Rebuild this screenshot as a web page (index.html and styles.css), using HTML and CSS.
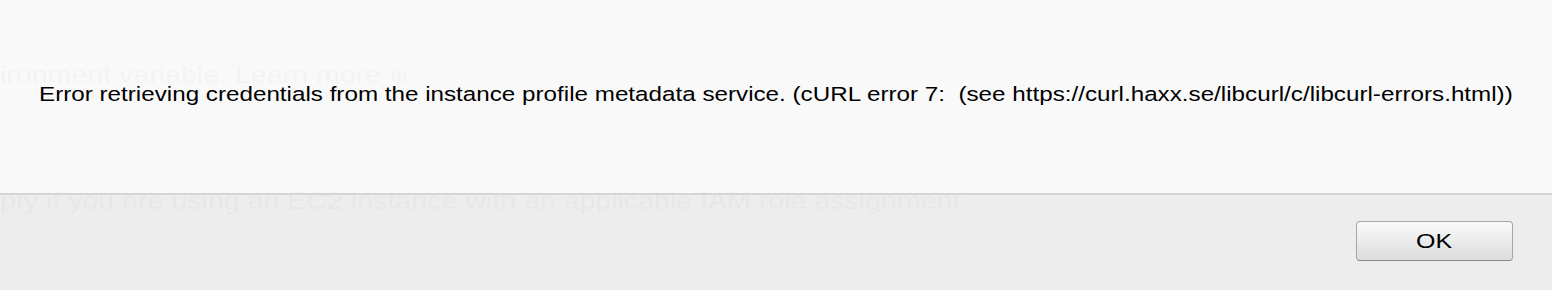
FILE: index.html
```html
<!DOCTYPE html>
<html>
<head>
<meta charset="utf-8">
<link rel="stylesheet" href="styles.css">
</head>
<body>
<div class="page" aria-hidden="true">
  <p class="bg-line bg-line-1">ironment variable. Learn more <span class="bg-icon">⊕</span></p>
  <p class="bg-line bg-line-2">pty if you are using an EC2 instance with an applicable IAM role assignment.</p>
</div>
<div class="dialog">
  <div class="dialog-body">
    <p class="message">Error retrieving credentials from the instance profile metadata service. (cURL error 7:&nbsp; (see https://curl.haxx.se/libcurl/c/libcurl-errors.html))</p>
  </div>
  <div class="dialog-footer">
    <button class="ok-button"><span class="ok-label">OK</span></button>
  </div>
</div>
</body>
</html>
```
FILE: styles.css
```css
html, body {
  margin: 0;
  padding: 0;
  width: 1552px;
  height: 290px;
  overflow: hidden;
  background: #ffffff;
}

.page {
  position: absolute;
  left: 0;
  top: 0;
  width: 1552px;
  height: 290px;
  overflow: hidden;
  font-family: "Liberation Sans", Arial, sans-serif;
  color: #000;
}

.bg-line {
  margin: 0;
  width: 820px;
  white-space: nowrap;
  font-size: 24px;
  line-height: 28px;
  transform: scaleX(1.19);
  transform-origin: left center;
}

.bg-line-1 {
  padding-top: 61px;
}

.bg-line-2 {
  padding-top: 97px;
}

.bg-icon {
  font-size: 20px;
}

.dialog {
  position: absolute;
  left: 0;
  top: 0;
  width: 1552px;
  height: 290px;
  display: flex;
  flex-direction: column;
  font-family: "Liberation Sans", Arial, sans-serif;
}

.dialog-body {
  height: 193px;
  background: rgba(249, 249, 249, 0.975);
  display: flex;
  align-items: flex-start;
  box-sizing: border-box;
  padding: 82px 0 0 39px;
}

.message {
  margin: 0;
  font-size: 20.5px;
  line-height: 24px;
  color: #000;
  white-space: nowrap;
  transform: scaleX(1.181);
  transform-origin: left center;
}

.dialog-footer {
  flex: 1;
  background: rgba(237, 237, 237, 0.975);
  border-top: 2px solid rgba(212, 212, 212, 0.95);
  display: flex;
  justify-content: flex-end;
  align-items: flex-start;
  padding: 26px 39px 0 0;
}

.ok-button {
  width: 157px;
  height: 40px;
  border: 1px solid #a6a6a6;
  border-bottom-color: #8a8a8a;
  border-radius: 4px;
  background: linear-gradient(#fafafa, #dcdcdc);
  font-family: "Liberation Sans", Arial, sans-serif;
  font-size: 21px;
  color: #000;
  padding: 0;
}

.ok-label {
  display: inline-block;
  transform: scaleX(1.19);
}
```
